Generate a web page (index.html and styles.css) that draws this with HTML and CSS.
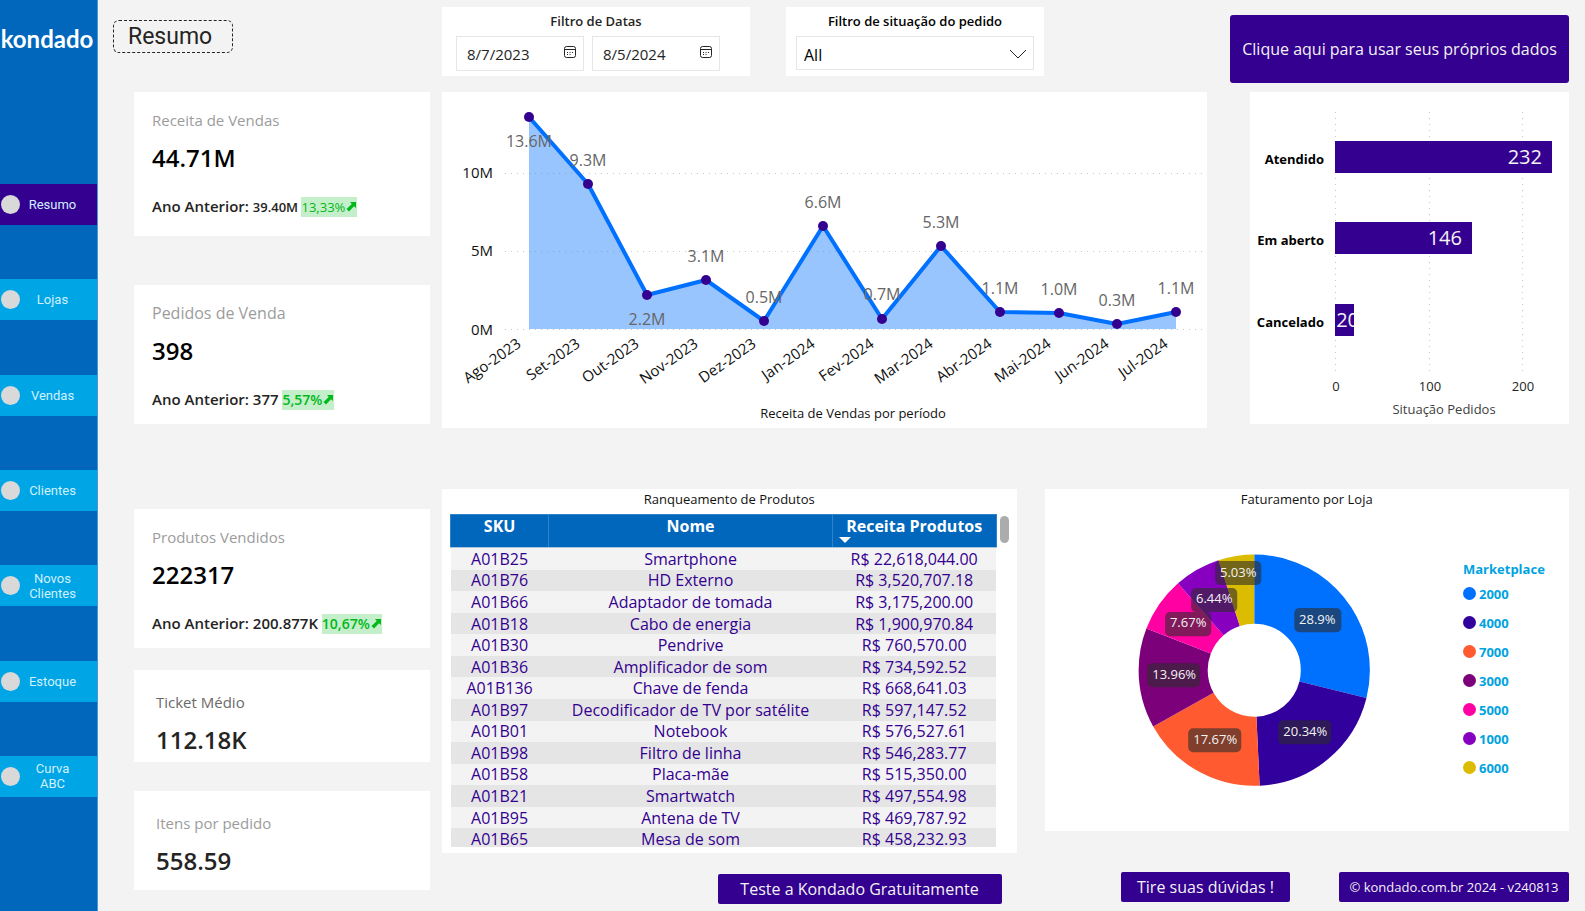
FILE: index.html
```html
<!DOCTYPE html>
<html lang="pt-BR">
<head>
  <meta charset="UTF-8">
  <meta name="viewport" content="width=device-width, initial-scale=1.0">
  <title>Kondado - Resumo</title>
  <link rel="stylesheet" href="styles.css">
</head>
<body>

  <!-- Menu lateral -->
  <aside class="sidebar">
    <a href="#" class="logo">kondado</a>
    <nav class="menu">
      <a href="#" class="active"><i></i><span>Resumo</span></a>
      <a href="#"><i></i><span>Lojas</span></a>
      <a href="#"><i></i><span>Vendas</span></a>
      <a href="#"><i></i><span>Clientes</span></a>
      <a href="#"><i></i><span>Novos Clientes</span></a>
      <a href="#"><i></i><span>Estoque</span></a>
      <a href="#"><i></i><span>Curva ABC</span></a>
    </nav>
  </aside>

  <!-- Indicadores -->
  <section class="indicators">
    <h1>Resumo</h1>

    <div class="group sales">
      <div class="card kpi total">
        <h2>Receita de Vendas</h2>
        <p class="value">44.71M</p>
        <p class="previous">Ano Anterior: <small>39.40M <mark class="light">13,33%<svg viewBox="0 0 10 10"><path d="M4 0h6v6L8 4.200 3 9.500 0.500 7 5.800 2z"/></svg></mark></small></p>
      </div>
      <div class="card kpi">
        <h2 class="strong">Pedidos de Venda</h2>
        <p class="value">398</p>
        <p class="previous">Ano Anterior: 377 <mark>5,57%<svg viewBox="0 0 10 10"><path d="M4 0h6v6L8 4.200 3 9.500 0.500 7 5.800 2z"/></svg></mark></p>
      </div>
    </div>

    <div class="group products">
      <div class="card kpi">
        <h2 class="medium">Produtos Vendidos</h2>
        <p class="value">222317</p>
        <p class="previous">Ano Anterior: 200.877K <mark>10,67%<svg viewBox="0 0 10 10"><path d="M4 0h6v6L8 4.200 3 9.500 0.500 7 5.800 2z"/></svg></mark></p>
      </div>
      <div class="card kpi small">
        <h2 class="dark">Ticket Médio</h2>
        <p class="value">112.18K</p>
      </div>
      <div class="card kpi small last">
        <h2>Itens por pedido</h2>
        <p class="value">558.59</p>
      </div>
    </div>
  </section>

  <main>
    <!-- Filtros -->
    <div class="row filters">
      <fieldset class="card filter dates">
        <legend>Filtro de Datas</legend>
        <div class="fields">
          <label class="field">
            <input type="text" value="8/7/2023" aria-label="Data inicial">
            <svg viewBox="0 0 12 12"><rect x="0.5" y="0.5" width="11" height="11" rx="2"/><path d="M1 3.500h10M3 6.500h1M5.500 6.500h1M8 6.500h1M3 8.500h1M5.500 8.500h1"/></svg>
          </label>
          <label class="field">
            <input type="text" value="8/5/2024" aria-label="Data final">
            <svg viewBox="0 0 12 12"><rect x="0.5" y="0.5" width="11" height="11" rx="2"/><path d="M1 3.500h10M3 6.500h1M5.500 6.500h1M8 6.500h1M3 8.500h1M5.500 8.500h1"/></svg>
          </label>
        </div>
      </fieldset>
      <div class="card filter status">
        <label for="situacao">Filtro de situação do pedido</label>
        <div class="select">
          <select id="situacao">
            <option>All</option>
            <option>Atendido</option>
            <option>Em aberto</option>
            <option>Cancelado</option>
          </select>
          <svg viewBox="0 0 18 10"><path d="M1 1l8 8 8-8"/></svg>
        </div>
      </div>
      <a href="#" class="button own-data">Clique aqui para usar seus próprios dados</a>
    </div>

    <!-- Graficos de cima -->
    <div class="row charts">
      <div class="card revenue">
        <svg viewBox="0 0 765 336" role="img" aria-label="Receita de Vendas por período">
          <path class="area" d="M87 237V25L146 92 205 203 264 188 322 229 381 134 440 227 499 154 558 220 617 221 675 232 734 220V237z"/>
          <g class="grid">
            <path d="M63 81.500H760M63 159.500H760M63 237.500H760"/>
          </g>
          <path class="line" d="M87 25L146 92 205 203 264 188 322 229 381 134 440 227 499 154 558 220 617 221 675 232 734 220"/>
          <g class="dots">
            <circle cx="87" cy="25" r="5"/>
            <circle cx="146" cy="92" r="5"/>
            <circle cx="205" cy="203" r="5"/>
            <circle cx="264" cy="188" r="5"/>
            <circle cx="322" cy="229" r="5"/>
            <circle cx="381" cy="134" r="5"/>
            <circle cx="440" cy="227" r="5"/>
            <circle cx="499" cy="154" r="5"/>
            <circle cx="558" cy="220" r="5"/>
            <circle cx="617" cy="221" r="5"/>
            <circle cx="675" cy="232" r="5"/>
            <circle cx="734" cy="220" r="5"/>
          </g>
          <g class="labels">
            <text x="87" y="55">13.6M</text>
            <text x="146" y="74">9.3M</text>
            <text x="205" y="233">2.2M</text>
            <text x="264" y="170">3.1M</text>
            <text x="322" y="211">0.5M</text>
            <text x="381" y="116">6.6M</text>
            <text x="440" y="208">0.7M</text>
            <text x="499" y="136">5.3M</text>
            <text x="558" y="202">1.1M</text>
            <text x="617" y="203">1.0M</text>
            <text x="675" y="214">0.3M</text>
            <text x="734" y="202">1.1M</text>
          </g>
          <g class="axis">
            <text x="51" y="86">10M</text>
            <text x="51" y="164">5M</text>
            <text x="51" y="243">0M</text>
            <text transform="translate(80 254) rotate(-35)">Ago-2023</text>
            <text transform="translate(139 254) rotate(-35)">Set-2023</text>
            <text transform="translate(198 254) rotate(-35)">Out-2023</text>
            <text transform="translate(257 254) rotate(-35)">Nov-2023</text>
            <text transform="translate(315 254) rotate(-35)">Dez-2023</text>
            <text transform="translate(374 254) rotate(-35)">Jan-2024</text>
            <text transform="translate(433 254) rotate(-35)">Fev-2024</text>
            <text transform="translate(492 254) rotate(-35)">Mar-2024</text>
            <text transform="translate(551 254) rotate(-35)">Abr-2024</text>
            <text transform="translate(610 254) rotate(-35)">Mai-2024</text>
            <text transform="translate(668 254) rotate(-35)">Jun-2024</text>
            <text transform="translate(727 254) rotate(-35)">Jul-2024</text>
          </g>
          <text class="caption" x="411" y="326">Receita de Vendas por período</text>
        </svg>
      </div>

      <div class="card orders">
        <svg viewBox="0 0 319 332" role="img" aria-label="Situação Pedidos">
          <defs>
            <clipPath id="bar-cancelado"><rect x="85" y="212" width="19" height="32"/></clipPath>
          </defs>
          <g class="grid">
            <path d="M85.500 20V282M179.500 20V282M272.500 20V282"/>
          </g>
          <g class="bars">
            <rect x="85" y="49" width="217" height="32"/>
            <rect x="85" y="130" width="137" height="32"/>
            <rect x="85" y="212" width="19" height="32"/>
          </g>
          <g class="bar-values">
            <text x="292" y="72">232</text>
            <text x="212" y="153">146</text>
            <text x="109" y="235" clip-path="url(#bar-cancelado)">20</text>
          </g>
          <g class="bar-names">
            <text x="74" y="72">Atendido</text>
            <text x="74" y="153">Em aberto</text>
            <text x="74" y="235">Cancelado</text>
          </g>
          <g class="ticks">
            <text x="86" y="299">0</text>
            <text x="180" y="299">100</text>
            <text x="273" y="299">200</text>
          </g>
          <text class="caption soft" x="194" y="322">Situação Pedidos</text>
        </svg>
      </div>
    </div>

    <div class="row bottom">
      <!-- Ranking -->
      <div class="ranking">
        <div class="card">
          <h3>Ranqueamento de Produtos</h3>
          <div class="scroll">
            <div class="viewport">
              <table>
                <thead>
                  <tr><th>SKU</th><th>Nome</th><th class="sorted">Receita Produtos</th></tr>
                </thead>
                <tbody>
                  <tr><td>A01B25</td><td>Smartphone</td><td>R$ 22,618,044.00</td></tr>
                  <tr><td>A01B76</td><td>HD Externo</td><td>R$ 3,520,707.18</td></tr>
                  <tr><td>A01B66</td><td>Adaptador de tomada</td><td>R$ 3,175,200.00</td></tr>
                  <tr><td>A01B18</td><td>Cabo de energia</td><td>R$ 1,900,970.84</td></tr>
                  <tr><td>A01B30</td><td>Pendrive</td><td>R$ 760,570.00</td></tr>
                  <tr><td>A01B36</td><td>Amplificador de som</td><td>R$ 734,592.52</td></tr>
                  <tr><td>A01B136</td><td>Chave de fenda</td><td>R$ 668,641.03</td></tr>
                  <tr><td>A01B97</td><td>Decodificador de TV por satélite</td><td>R$ 597,147.52</td></tr>
                  <tr><td>A01B01</td><td>Notebook</td><td>R$ 576,527.61</td></tr>
                  <tr><td>A01B98</td><td>Filtro de linha</td><td>R$ 546,283.77</td></tr>
                  <tr><td>A01B58</td><td>Placa-mãe</td><td>R$ 515,350.00</td></tr>
                  <tr><td>A01B21</td><td>Smartwatch</td><td>R$ 497,554.98</td></tr>
                  <tr><td>A01B95</td><td>Antena de TV</td><td>R$ 469,787.92</td></tr>
                  <tr><td>A01B65</td><td>Mesa de som</td><td>R$ 458,232.93</td></tr>
                </tbody>
              </table>
            </div>
            <div class="thumb"></div>
          </div>
        </div>
        <a href="#" class="button trial">Teste a Kondado Gratuitamente</a>
      </div>

      <!-- Faturamento -->
      <div class="stores">
        <div class="card">
          <h3>Faturamento por Loja</h3>
          <div class="donut-row">
            <svg class="donut" viewBox="0 0 400 322" role="img" aria-label="Faturamento por Loja">
              <g class="slices" transform="rotate(-90 209 161)">
                <circle cx="209" cy="161" r="81" pathLength="100" stroke="#0070ff" stroke-dasharray="28.9 71.1"/>
                <circle cx="209" cy="161" r="81" pathLength="100" stroke="#32009c" stroke-dasharray="20.34 79.66" stroke-dashoffset="-28.9"/>
                <circle cx="209" cy="161" r="81" pathLength="100" stroke="#ff5a30" stroke-dasharray="17.67 82.33" stroke-dashoffset="-49.24"/>
                <circle cx="209" cy="161" r="81" pathLength="100" stroke="#7d007b" stroke-dasharray="13.96 86.04" stroke-dashoffset="-66.91"/>
                <circle cx="209" cy="161" r="81" pathLength="100" stroke="#ff00a2" stroke-dasharray="7.67 92.33" stroke-dashoffset="-80.87"/>
                <circle cx="209" cy="161" r="81" pathLength="100" stroke="#8700c0" stroke-dasharray="6.44 93.56" stroke-dashoffset="-88.54"/>
                <circle cx="209" cy="161" r="81" pathLength="100" stroke="#dcbc00" stroke-dasharray="5.02 94.98" stroke-dashoffset="-94.98"/>
              </g>
              <g class="tags">
                <rect x="249" y="99" width="47" height="24" rx="5"/>
                <rect x="233" y="211" width="53" height="24" rx="5"/>
                <rect x="143" y="219" width="53" height="24" rx="5"/>
                <rect x="102" y="154" width="53" height="24" rx="5"/>
                <rect x="120" y="103" width="46" height="24" rx="5"/>
                <rect x="146" y="79" width="46" height="24" rx="5"/>
                <rect x="170" y="52" width="46" height="24" rx="5"/>
                <text x="272" y="115">28.9%</text>
                <text x="260" y="227">20.34%</text>
                <text x="170" y="235">17.67%</text>
                <text x="129" y="170">13.96%</text>
                <text x="143" y="118">7.67%</text>
                <text x="169" y="94">6.44%</text>
                <text x="193" y="68">5.03%</text>
              </g>
            </svg>
            <div class="legend">
              <h4>Marketplace</h4>
              <ul>
                <li class="s2000">2000</li>
                <li class="s4000">4000</li>
                <li class="s7000">7000</li>
                <li class="s3000">3000</li>
                <li class="s5000">5000</li>
                <li class="s1000">1000</li>
                <li class="s6000">6000</li>
              </ul>
            </div>
          </div>
        </div>
        <div class="links">
          <a href="#" class="button help">Tire suas dúvidas !</a>
          <a href="#" class="button version">© kondado.com.br 2024 - v240813</a>
        </div>
      </div>
    </div>
  </main>

</body>
</html>
```
FILE: styles.css
```css
* {
  margin: 0;
  padding: 0;
  box-sizing: border-box;
}

body {
  display: flex;
  min-height: 100vh;
  background: #f3f3f3;
  font-family: "Segoe UI", "Open Sans", "Noto Sans", sans-serif;
  font-size: 15px;
  color: #252423;
}

a {
  text-decoration: none;
}

.card {
  background: #fff;
}

/* menu lateral */
.sidebar {
  display: flex;
  flex-direction: column;
  flex: none;
  width: 98px;
  padding-bottom: 114px;
  background: #0067bd;
  border-right: 1px solid #4a96d3;
}

.logo {
  height: 184px;
  padding-top: 24px;
  padding-right: 3px;
  text-align: center;
  font-family: Lato, sans-serif;
  font-size: 24px;
  font-weight: 700;
  line-height: 30px;
  color: #fff;
}

.menu {
  display: flex;
  flex: 1;
  flex-direction: column;
  justify-content: space-between;
}

.menu a {
  display: flex;
  align-items: center;
  height: 41px;
  padding: 0 17px 0 1px;
  background: #00a5e5;
  font-family: Roboto, sans-serif;
  font-size: 13px;
  line-height: 15px;
  color: #d0f0fc;
}

.menu a.active {
  background: #340090;
}

.menu i {
  flex: none;
  width: 19px;
  height: 19px;
  border-radius: 50%;
  background: #d9d9d9;
}

.menu span {
  flex: 1;
  padding-left: 5px;
  text-align: center;
}

/* indicadores */
.indicators {
  flex: none;
  width: 332px;
  padding-top: 20px;
}

h1 {
  width: 120px;
  height: 33px;
  margin-left: 15px;
  padding-left: 14px;
  border: 1px dashed #252423;
  border-radius: 6px;
  font-family: Roboto, sans-serif;
  font-size: 23px;
  font-weight: 400;
  line-height: 32px;
}

.group {
  display: flex;
  flex-direction: column;
  margin-left: 36px;
}

.sales {
  gap: 49px;
  margin-top: 39px;
}

.products {
  gap: 22px;
  margin-top: 85px;
}

.kpi {
  padding: 16px 18px 13px;
}

.kpi.total {
  min-height: 144px;
}

.kpi.small {
  min-height: 92px;
  margin-bottom: 7px;
  padding: 20px 22px 0;
}

.kpi.small.last {
  min-height: 99px;
}

.kpi h2 {
  font-size: 15px;
  font-weight: 400;
  line-height: 24px;
  color: #9c9c9c;
}

.kpi h2.medium {
  font-weight: 500;
}

.kpi h2.strong {
  font-size: 16px;
  font-weight: 500;
}

.kpi h2.dark {
  color: #6a6a6a;
}

.value {
  margin-top: 8px;
  font-size: 24px;
  font-weight: 600;
  line-height: 36px;
  color: #000;
}

.small .value {
  color: #252423;
}

.previous {
  margin-top: 18px;
  font-weight: 600;
  line-height: 24px;
  white-space: nowrap;
}

.previous small {
  font-size: 13px;
}

.previous mark {
  display: inline-block;
  background: #c5efcb;
  font-size: 14px;
  line-height: 20px;
  color: #00b81a;
}

.previous mark.light {
  font-size: 13px;
  font-weight: 400;
}

.previous mark svg {
  width: 10px;
  height: 10px;
  margin: 0 1px;
  fill: #00b81a;
}

/* conteudo */
main {
  flex: 1;
  min-width: 0;
  padding: 7px 16px 7px 12px;
}

.row {
  display: flex;
  align-items: flex-start;
}

.button {
  display: flex;
  align-items: center;
  justify-content: center;
  background: #340090;
  border-radius: 2px;
  font-size: 16px;
  color: #f3f3f3;
  white-space: nowrap;
}

/* filtros */
.filters {
  gap: 36px;
  height: 85px;
}

.filter {
  height: 69px;
  border: 0;
  text-align: center;
  font-size: 13px;
  font-weight: 600;
  color: #000;
}

.filter legend,
.filter > label {
  display: block;
  float: left;
  width: 100%;
  padding-top: 4px;
  line-height: 20px;
}

.dates {
  width: 308px;
}

.dates legend {
  color: #252423;
}

.fields {
  display: flex;
  gap: 8px;
  clear: both;
  padding: 5px 30px 0 14px;
}

.field {
  display: flex;
  flex: 1;
  align-items: flex-start;
  height: 35px;
  padding-right: 7px;
  border: 1px solid #e6e6e6;
}

.field input {
  width: 100%;
  min-width: 0;
  height: 33px;
  padding-left: 10px;
  border: 0;
  outline: 0;
  background: none;
  font: 400 15px "Segoe UI", "Open Sans", sans-serif;
  color: #252423;
}

.field svg {
  flex: none;
  width: 12px;
  height: 12px;
  margin-top: 9px;
  fill: none;
  stroke: #252423;
}

.status {
  width: 258px;
  padding: 0 10px;
}

.select {
  position: relative;
  clear: both;
  padding-top: 5px;
}

.select select {
  display: block;
  width: 100%;
  height: 34px;
  padding: 3px 7px 0;
  appearance: none;
  border: 1px solid #e6e6e6;
  border-radius: 0;
  background: #fff;
  font: 400 16px "Segoe UI", "Open Sans", sans-serif;
  color: #000;
}

.select svg {
  position: absolute;
  top: 18px;
  right: 7px;
  width: 18px;
  height: 10px;
  fill: none;
  stroke: #252423;
  pointer-events: none;
}

.own-data {
  width: 339px;
  height: 68px;
  margin: 8px 0 0 auto;
  border-radius: 3px;
}

/* graficos */
.charts {
  gap: 43px;
}

.charts svg {
  display: block;
  width: 100%;
}

.revenue {
  flex: 765;
}

.orders {
  flex: 319;
}

.area {
  fill: #99c5ff;
}

.line {
  fill: none;
  stroke: #0070ff;
  stroke-width: 4;
  stroke-linejoin: round;
}

.grid {
  fill: none;
  stroke: #808080;
  stroke-opacity: 0.45;
  stroke-dasharray: 1 5;
}

.dots,
.bars {
  fill: #340090;
}

.labels {
  font-size: 16px;
  text-anchor: middle;
  fill: #666;
}

.axis {
  font-size: 15px;
  text-anchor: end;
  fill: #111;
}

.caption {
  font-size: 13px;
  text-anchor: middle;
  fill: #111;
}

.caption.soft {
  fill: #404040;
}

.bar-values {
  font-size: 20px;
  text-anchor: end;
  fill: #f3f3f3;
}

.bar-names {
  font-size: 13px;
  font-weight: 700;
  text-anchor: end;
  fill: #000;
}

.ticks {
  font-size: 13px;
  text-anchor: middle;
  fill: #252423;
}

/* parte de baixo */
.bottom {
  gap: 28px;
  margin-top: 61px;
}

.bottom h3 {
  font-size: 13px;
  font-weight: 400;
  line-height: 20px;
  text-align: center;
  color: #111;
}

.ranking {
  flex: 574;
}

.ranking .card {
  height: 364px;
}

.scroll {
  display: flex;
  gap: 3px;
  padding: 5px 8px 0;
}

.viewport {
  flex: 1;
  height: 333px;
  overflow: hidden;
}

.thumb {
  width: 9px;
  height: 27px;
  margin-top: 2px;
  border-radius: 5px;
  background: #acacac;
}

table {
  width: 100%;
  height: 336px;
  table-layout: fixed;
  border-collapse: collapse;
  text-align: center;
  color: #340090;
}

th {
  width: 18%;
  height: 33px;
  padding-bottom: 10px;
  border: 1px solid #2f83c9;
  border-bottom-color: #a9c3d8;
  background: #0067bd;
  font-size: 16px;
  line-height: 20px;
  color: #fff;
}

th:nth-child(2) {
  width: 52%;
}

th:nth-child(3) {
  width: 30%;
}

.sorted {
  position: relative;
}

/* seta da ordenacao */
.sorted::after {
  content: "";
  position: absolute;
  bottom: 4px;
  left: 6px;
  border: 6px solid transparent;
  border-top-color: #fff;
  border-bottom: 0;
}

td {
  background: #f3f3f3;
  font-size: 16px;
  line-height: 20px;
}

tr:nth-child(even) td {
  background: #e5e5e5;
}

.trial {
  width: 284px;
  height: 30px;
  margin: 21px 15px 0 auto;
}

.stores {
  flex: 524;
}

.donut-row {
  display: flex;
}

.donut {
  display: block;
  flex: 1;
  min-width: 0;
}

.slices circle {
  fill: none;
  stroke-width: 69;
}

.tags {
  font-size: 13px;
  text-anchor: middle;
}

.tags rect {
  fill: #2b2b2b;
  fill-opacity: 0.6;
}

.tags text {
  fill: #f3f3f3;
}

.legend {
  flex: none;
  width: 124px;
  padding: 50px 0 0 18px;
  font-size: 13px;
  font-weight: 700;
  color: #00a3e0;
}

.legend h4 {
  line-height: 20px;
}

.legend li {
  display: flex;
  align-items: center;
  gap: 3px;
  height: 29px;
}

.legend li::before {
  content: "";
  width: 13px;
  height: 13px;
  border-radius: 50%;
  background: currentColor;
}

.s2000::before { color: #0070ff; }
.s4000::before { color: #32009c; }
.s7000::before { color: #ff5a30; }
.s3000::before { color: #7d007b; }
.s5000::before { color: #ff00a2; }
.s1000::before { color: #8700c0; }
.s6000::before { color: #dcbc00; }

.links {
  display: flex;
  justify-content: flex-end;
  gap: 49px;
  margin-top: 41px;
}

.links .button {
  height: 30px;
}

.help {
  width: 169px;
}

.version {
  width: 230px;
  font-size: 13px;
}
```
